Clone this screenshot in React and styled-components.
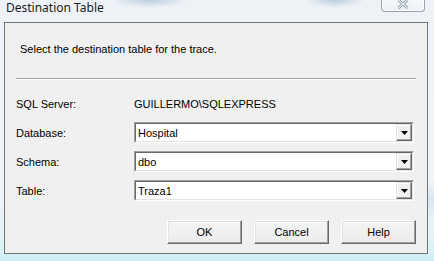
import React from "react";
import styled, { createGlobalStyle } from "styled-components";

const Global = createGlobalStyle`
  html, body { margin: 0; padding: 0; }
  body { width: 434px; height: 261px; overflow: hidden; }
`;

const Frame = styled.div`
  position: relative;
  width: 434px;
  height: 261px;
  box-sizing: border-box;
  display: flex;
  flex-direction: column;
  background:
    radial-gradient(ellipse 40px 8px at 150px 0px, rgba(150,175,200,0.55), transparent),
    radial-gradient(ellipse 30px 8px at 335px 0px, rgba(150,175,200,0.55), transparent),
    radial-gradient(ellipse 120px 20px at 420px 200px, rgba(190,215,235,0.5), transparent),
    linear-gradient(180deg, #eef2f6 0%, #f2f5f8 70%, #e2f2f6 92%, #cdf0f5 100%);
  font-family: "Liberation Sans", Arial, sans-serif;
`;

const TitleBar = styled.div`
  height: 22px;
  display: flex;
  align-items: flex-start;
  padding-left: 6px;
`;

const Title = styled.span`
  font-family: "Noto Sans", "Open Sans", sans-serif;
  font-size: 12px;
  line-height: 14px;
  margin-top: 1px;
  color: #1a1a1a;
`;

const CloseButton = styled.div`
  position: absolute;
  left: 381px;
  top: -3px;
  width: 42px;
  height: 14px;
  border: 1px solid #9aa3ad;
  border-top: none;
  border-radius: 0 0 4px 4px;
  background: linear-gradient(180deg, rgba(255,255,255,0.6), rgba(235,240,245,0.8));
  box-shadow: inset 0 0 0 1px rgba(255,255,255,0.7);
  display: flex;
  align-items: center;
  justify-content: center;
`;

const Client = styled.div`
  margin: 0 6px 0 4px;
  height: 232px;
  box-sizing: border-box;
  border: 1px solid #6f7478;
  background: #f0f0f0;
  padding: 0 11px;
  display: flex;
  flex-direction: column;
  font-size: 11px;
  color: #000;
`;

const Instruction = styled.div`
  margin-top: 20px;
  padding-left: 4px;
  line-height: 13px;
`;

const Separator = styled.div`
  margin-top: 22px;
  height: 1px;
  background: #a0a0a0;
  border-bottom: 1px solid #ffffff;
`;

const Row = styled.div`
  display: flex;
  align-items: center;
  height: 21px;
  margin-top: ${(p) => p.$gap}px;
`;

const Label = styled.div`
  width: 118px;
  flex: none;
`;

const Value = styled.div`
  flex: 1;
`;

const Combo = styled.div`
  width: 280px;
  height: 21px;
  box-sizing: border-box;
  border-top: 1px solid #a0a0a0;
  border-left: 1px solid #a0a0a0;
  border-right: 1px solid #ffffff;
  border-bottom: 1px solid #ffffff;
  display: flex;
`;

const ComboInner = styled.div`
  flex: 1;
  display: flex;
  align-items: center;
  border-top: 1px solid #696969;
  border-left: 1px solid #696969;
  border-right: 1px solid #e3e3e3;
  border-bottom: 1px solid #e3e3e3;
  background: #fff;
  padding-right: 0;
`;

const ComboText = styled.div`
  flex: 1;
  padding-left: 2px;
`;

const DropButton = styled.div`
  width: 16px;
  height: 17px;
  box-sizing: border-box;
  background: #f0f0f0;
  border-top: 1px solid #e3e3e3;
  border-left: 1px solid #e3e3e3;
  border-right: 1px solid #696969;
  border-bottom: 1px solid #696969;
  box-shadow: inset -1px -1px 0 #a0a0a0, inset 1px 1px 0 #ffffff;
  display: flex;
  align-items: center;
  justify-content: center;
`;

const Buttons = styled.div`
  display: flex;
  justify-content: flex-end;
  margin-top: 19px;
  gap: 12px;
`;

const Button = styled.div`
  width: 75px;
  height: 24px;
  box-sizing: border-box;
  background: linear-gradient(180deg, #f4f4f4, #ececec);
  border-top: 1px solid #ffffff;
  border-left: 1px solid #ffffff;
  border-right: 1px solid #696969;
  border-bottom: 1px solid #696969;
  box-shadow: inset -1px -1px 0 #a0a0a0, inset 1px 1px 0 #e3e3e3;
  display: flex;
  align-items: center;
  justify-content: center;
`;

const Arrow = () => (
  <svg width="7" height="4" viewBox="0 0 7 4">
    <path d="M0 0h7L3.5 4z" fill="#000" />
  </svg>
);

const ComboBox = ({ value }) => (
  <Combo>
    <ComboInner>
      <ComboText>{value}</ComboText>
      <DropButton>
        <Arrow />
      </DropButton>
    </ComboInner>
  </Combo>
);

export default function App() {
  return (
    <>
      <Global />
      <Frame>
        <TitleBar>
          <Title>Destination Table</Title>
        </TitleBar>
        <CloseButton>
          <svg width="12" height="10" viewBox="0 0 12 10">
            <path
              d="M1.5 1 L10.5 9 M10.5 1 L1.5 9"
              stroke="#7c8794"
              strokeWidth="2.6"
              fill="none"
            />
            <path
              d="M1.5 1 L10.5 9 M10.5 1 L1.5 9"
              stroke="#f4f6f8"
              strokeWidth="1.1"
              fill="none"
            />
          </svg>
        </CloseButton>
        <Client>
          <Instruction>Select the destination table for the trace.</Instruction>
          <Separator />
          <Row $gap={13}>
            <Label>SQL Server:</Label>
            <Value>GUILLERMO\SQLEXPRESS</Value>
          </Row>
          <Row $gap={8}>
            <Label>Database:</Label>
            <ComboBox value="Hospital" />
          </Row>
          <Row $gap={8}>
            <Label>Schema:</Label>
            <ComboBox value="dbo" />
          </Row>
          <Row $gap={8}>
            <Label>Table:</Label>
            <ComboBox value="Traza1" />
          </Row>
          <Buttons>
            <Button>OK</Button>
            <Button>Cancel</Button>
            <Button>Help</Button>
          </Buttons>
        </Client>
      </Frame>
    </>
  );
}
